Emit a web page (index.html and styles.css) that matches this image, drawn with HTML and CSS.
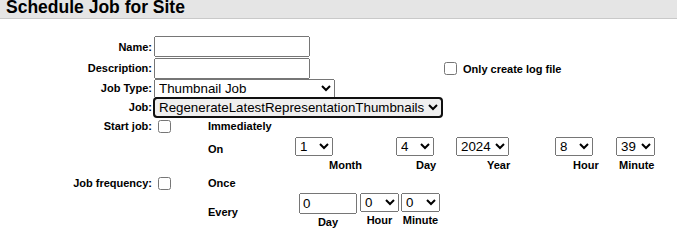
FILE: index.html
```html
<!DOCTYPE html>
<html>
<head>
  <link rel="stylesheet" href="styles.css">
  <script>
    function fillRange(id, from, to, selected) {
      var sel = document.getElementById(id);
      for (var i = from; i <= to; i++) {
        var opt = document.createElement('option');
        opt.value = i;
        opt.text = i;
        if (i === selected) opt.selected = true;
        sel.appendChild(opt);
      }
    }

    window.onload = function() {
      fillRange('start-month', 1, 12, 1);
      fillRange('start-day', 1, 31, 4);
      fillRange('start-year', 2024, 2030, 2024);
      fillRange('start-hour', 0, 23, 8);
      fillRange('start-minute', 0, 59, 39);
      fillRange('freq-hour', 0, 23, 0);
      fillRange('freq-minute', 0, 59, 0);
    };
  </script>
</head>
<body>
  <div class="titlebar">
    <h2 class="title">Schedule Job for Site</h2>
  </div>

  <div class="form">
    <div class="lbl">Name:</div>
    <div class="fld name-fld"><input class="txt" type="text"></div>
    <div></div>

    <div class="lbl">Description:</div>
    <div class="fld"><input class="txt" type="text"></div>
    <div class="fld logopt"><input type="checkbox"> Only create log file</div>

    <div class="lbl">Job Type:</div>
    <div class="fld">
      <select class="sel-type">
        <option selected>Thumbnail Job</option>
        <option>Index Job</option>
        <option>Cleanup Job</option>
      </select>
    </div>
    <div></div>

    <div class="lbl">Job:</div>
    <div class="fld span2">
      <select class="sel-job focused">
        <option selected>RegenerateLatestRepresentationThumbnails</option>
        <option>RegenerateAllThumbnails</option>
      </select>
    </div>

    <div class="lbl lbl-start">Start job:</div>
    <div class="fld span2">
      <div class="when">
        <input type="checkbox">
        <div class="opt">Immediately</div>
        <div></div>

        <div></div>
        <div class="opt opt-on">On</div>
        <div class="dates">
          <select class="sel-month" id="start-month"></select>
          <select class="sel-day" id="start-day"></select>
          <select class="sel-year" id="start-year"></select>
          <select class="sel-hour" id="start-hour"></select>
          <select class="sel-minute" id="start-minute"></select>
          <div class="sub dl-month">Month</div>
          <div class="sub dl-day">Day</div>
          <div class="sub dl-year">Year</div>
          <div class="sub dl-hour">Hour</div>
          <div class="sub dl-minute">Minute</div>
        </div>
      </div>
    </div>

    <div class="lbl lbl-freq">Job frequency:</div>
    <div class="fld span2">
      <div class="when freq">
        <input type="checkbox">
        <div class="opt">Once</div>
        <div></div>

        <div></div>
        <div class="opt opt-every">Every</div>
        <div class="every">
          <div class="ecell">
            <input class="txt-days" type="text" value="0">
            <div class="sub">Day</div>
          </div>
          <div class="ecell">
            <select class="sel-fhour" id="freq-hour"></select>
            <div class="sub">Hour</div>
          </div>
          <div class="ecell">
            <select class="sel-fminute" id="freq-minute"></select>
            <div class="sub">Minute</div>
          </div>
        </div>
      </div>
    </div>
  </div>
</body>
</html>
```

FILE: styles.css
```css
body {
  margin: 0;
  padding: 0;
  font-family: "Liberation Sans", Arial, sans-serif;
  color: #000;
  background: #fff;
}

.titlebar {
  width: 677px;
  height: 18px;
  background-color: #e5e5e5;
  border-bottom: 1px solid #c9c9c9;
}

.title {
  margin: 0;
  padding-left: 6px;
  font-size: 17.5px;
  line-height: 14px;
  font-weight: bold;
}

input[type="text"],
select {
  font-family: "Liberation Sans", Arial, sans-serif;
  font-size: 13.333px;
  color: #000;
}

.form {
  display: grid;
  grid-template-columns: 154px 286px auto;
  align-items: center;
  margin-top: 17px;
}

.lbl {
  font-size: 11px;
  font-weight: bold;
  line-height: 13px;
  text-align: right;
  padding-right: 2px;
}

.lbl-start {
  align-self: start;
  padding-top: 3px;
}

.lbl-freq {
  align-self: start;
  padding-top: 5px;
}

.fld {
  display: flex;
  align-items: center;
}

.span2 {
  grid-column: span 2;
}

.name-fld {
  padding-bottom: 1px;
}

.txt {
  width: 156px;
  box-sizing: border-box;
}

.logopt {
  font-size: 11px;
  font-weight: bold;
  white-space: pre;
}

.sel-type { width: 181px; }
.sel-job { width: 288px; }

.focused {
  outline: 2px solid #101010;
  outline-offset: -1px;
  border-radius: 3px;
}

/* start / frequency blocks */
.when {
  display: grid;
  grid-template-columns: 54px 87px auto;
  align-items: start;
  justify-items: start;
}

.when > input[type="checkbox"] {
  margin: 3px 3px 3px 4px;
}

.opt {
  font-size: 11px;
  font-weight: bold;
  line-height: 13px;
  padding-top: 3px;
}

.opt-on {
  padding-top: 7px;
}

.dates {
  display: grid;
  grid-template-columns: 101px 60px 99px 61px auto;
  justify-items: start;
  row-gap: 3px;
  margin-top: 1px;
}

.sub {
  font-size: 11px;
  font-weight: bold;
  line-height: 13px;
}

.sel-month { width: 38px; }
.sel-day { width: 38px; }
.sel-year { width: 53px; }
.sel-hour { width: 38px; }
.sel-minute { width: 39px; }

.dl-month { margin-left: 34px; }
.dl-day { margin-left: 20px; }
.dl-year { margin-left: 31px; }
.dl-hour { margin-left: 18px; }
.dl-minute { margin-left: 3px; }

.freq {
  grid-template-columns: 54px 91px auto;
  padding-top: 2px;
}

.opt-every {
  padding-top: 13px;
}

.every {
  display: flex;
  gap: 2px;
}

.ecell {
  display: flex;
  flex-direction: column;
  align-items: center;
  row-gap: 2px;
}

.ecell:first-child {
  margin-right: 1px;
}

.txt-days {
  width: 58px;
  box-sizing: border-box;
}

.sel-fhour { width: 39px; }
.sel-fminute { width: 39px; }
```
